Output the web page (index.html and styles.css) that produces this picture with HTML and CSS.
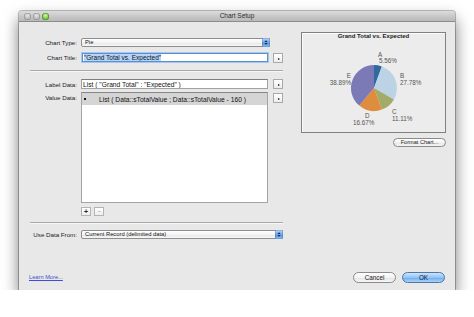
FILE: index.html
```html
<!DOCTYPE html>
<html>
<head>
<meta charset="utf-8">
<title>Chart Setup</title>
<link rel="stylesheet" href="styles.css">
</head>
<body>
<div class="window">
  <div class="titlebar">
    <div class="lights"><span class="light"></span><span class="light"></span><span class="light green"></span></div>
    <div class="title">Chart Setup</div>
  </div>
  <div class="content">
    <div class="left">
      <div class="row r1">
        <span class="lbl">Chart Type:</span>
        <div class="popup w189">
          <span class="ptext">Pie</span>
          <svg class="stepper" width="8" height="9" viewBox="0 0 8 9"><defs><linearGradient id="sg1" x1="0" y1="0" x2="0" y2="1"><stop offset="0" stop-color="#b9d6f6"/><stop offset="0.5" stop-color="#6ea6e6"/><stop offset="0.51" stop-color="#4d8ddc"/><stop offset="1" stop-color="#8cc0f4"/></linearGradient></defs><rect x="0" y="0" width="8" height="9" rx="1.5" fill="url(#sg1)" stroke="#4a6f9e" stroke-width="0.6"/><path d="M2.5 4 L4 2.2 L5.5 4 Z M2.5 5 L4 6.8 L5.5 5 Z" fill="#142850"/></svg>
        </div>
      </div>
      <div class="row r2">
        <span class="lbl">Chart Title:</span>
        <div class="field focus w186"><span class="sel">"Grand Total vs. Expected"</span></div>
        <span class="abtn"><span class="tri"></span></span>
      </div>
      <div class="sep s1"></div>
      <div class="row r3">
        <span class="lbl">Label Data:</span>
        <div class="field w187">List ( "Grand Total" : "Expected" )</div>
        <span class="abtn"><span class="tri"></span></span>
      </div>
      <div class="row r4">
        <span class="lbl">Value Data:</span>
        <div class="list">
          <div class="item"><span class="bullet"></span>List ( Data::sTotalValue ; Data::sTotalValue - 160 )</div>
        </div>
        <span class="abtn top"><span class="tri"></span></span>
      </div>
      <div class="pm"><span class="pmbtn">+</span><span class="pmbtn minus">−</span></div>
      <div class="sep s2"></div>
      <div class="row r5">
        <span class="lbl">Use Data From:</span>
        <div class="popup w202">
          <span class="ptext">Current Record (delimited data)</span>
          <svg class="stepper" width="8" height="9" viewBox="0 0 8 9"><defs><linearGradient id="sg2" x1="0" y1="0" x2="0" y2="1"><stop offset="0" stop-color="#b9d6f6"/><stop offset="0.5" stop-color="#6ea6e6"/><stop offset="0.51" stop-color="#4d8ddc"/><stop offset="1" stop-color="#8cc0f4"/></linearGradient></defs><rect x="0" y="0" width="8" height="9" rx="1.5" fill="url(#sg2)" stroke="#4a6f9e" stroke-width="0.6"/><path d="M2.5 4 L4 2.2 L5.5 4 Z M2.5 5 L4 6.8 L5.5 5 Z" fill="#142850"/></svg>
        </div>
      </div>
    </div>
    <div class="right">
      <div class="chartbox">
        <div class="ctitle">Grand Total vs. Expected</div>
        <svg class="pie" width="143" height="92" viewBox="0 0 143 92">
          <path d="M72 48 L72 25 A23 23 0 0 1 79.87 26.39 Z" fill="#2f6a9e"/>
          <path d="M72 48 L79.87 26.39 A23 23 0 0 1 91.92 59.5 Z" fill="#bcd3e5"/>
          <path d="M72 48 L91.92 59.5 A23 23 0 0 1 79.87 69.61 Z" fill="#a2ab6a"/>
          <path d="M72 48 L79.87 69.61 A23 23 0 0 1 57.22 65.62 Z" fill="#de8c3d"/>
          <path d="M72 48 L57.22 65.62 A23 23 0 0 1 72 25 Z" fill="#7b7ab7"/>
          <g class="plabel">
            <text x="76" y="17">A</text>
            <text x="77" y="23">5.56%</text>
            <text x="98" y="38">B</text>
            <text x="98" y="45">27.78%</text>
            <text x="90" y="74">C</text>
            <text x="90" y="81">11.11%</text>
            <text x="63" y="78">D</text>
            <text x="51" y="85">16.67%</text>
            <text x="49" y="38" text-anchor="end">E</text>
            <text x="49" y="45" text-anchor="end">38.89%</text>
          </g>
        </svg>
      </div>
      <div class="fmt"><span class="pill">Format Chart...</span></div>
    </div>
  </div>
  <div class="footer">
    <a class="learn">Learn More...</a>
    <div class="btns"><span class="btn">Cancel</span><span class="btn ok">OK</span></div>
  </div>
</div>
</body>
</html>
```
FILE: styles.css
```css
html, body {
  margin: 0;
  padding: 0;
  background: #ffffff;
}
body {
  font-family: "Liberation Sans", Arial, sans-serif;
  color: #111;
}
.window {
  margin: 11px 0 0 19px;
  width: 436px;
  height: 279px;
  background: #e8e8e8;
  display: flex;
  flex-direction: column;
  border-radius: 3px 3px 0 0;
  box-shadow: 0 8px 16px rgba(0, 0, 0, 0.55), 0 0 0 1px rgba(0, 0, 0, 0.25);
}
.titlebar {
  height: 11px;
  box-sizing: border-box;
  background: linear-gradient(#dcdcdc, #c6c6c6 60%, #b9b9b9);
  border-bottom: 1px solid #8c8c8c;
  border-radius: 3px 3px 0 0;
  display: flex;
  align-items: center;
}
.lights {
  display: flex;
  padding-left: 5px;
  width: 30px;
  box-sizing: border-box;
}
.light {
  width: 7px;
  height: 7px;
  border-radius: 50%;
  background: radial-gradient(circle at 50% 35%, #e6e6e6, #b0b0b0 75%);
  box-shadow: inset 0 0 0 0.6px #8e8e8e;
}
.light + .light {
  margin-left: 2px;
}
.light.green {
  background: radial-gradient(circle at 50% 35%, #d4f9b0, #6cc33c 60%, #3f9a1f);
  box-shadow: inset 0 0 0 0.6px #4a8a2c;
}
.title {
  flex: 1;
  text-align: center;
  margin-right: 30px;
  font-size: 6.5px;
  color: #2a2a2a;
  line-height: 10px;
}
.content {
  flex: 1;
  display: flex;
}
.left {
  width: 264px;
  box-sizing: border-box;
  padding-left: 11px;
  padding-top: 16px;
}
.right {
  margin-left: 18px;
  width: 145px;
  padding-top: 10px;
}
.row {
  display: flex;
  align-items: center;
}
.lbl {
  width: 47px;
  flex: none;
  text-align: right;
  margin-right: 4px;
  font-size: 6.2px;
  color: #222;
  white-space: nowrap;
}
.r1 { height: 9px; }
.r2 { height: 11px; margin-top: 5px; }
.r3 { height: 10px; margin-top: 7px; }
.r4 { margin-top: 3px; align-items: flex-start; }
.r4 .lbl { line-height: 12px; }
.r5 { height: 9px; margin-top: 6px; }
.popup {
  height: 9px;
  box-sizing: border-box;
  border: 1px solid #8e8e8e;
  border-radius: 2px;
  background: linear-gradient(#ffffff, #f4f4f4 50%, #e6e6e6 51%, #f7f7f7);
  display: flex;
  align-items: stretch;
}
.w189 { width: 189px; }
.w202 { width: 202px; }
.ptext {
  flex: 1;
  font-size: 5.8px;
  line-height: 7px;
  padding-left: 3px;
  white-space: nowrap;
}
.stepper {
  display: block;
  margin: -1px -1px -1px 0;
}
.field {
  height: 10px;
  box-sizing: border-box;
  background: #ffffff;
  border: 1px solid #a2a2a2;
  border-top-color: #7e7e7e;
  font-size: 6.7px;
  padding-left: 1px;
  display: flex;
  align-items: center;
  white-space: nowrap;
  overflow: hidden;
}
.w186 { width: 186px; margin-left: 1px; }
.w187 { width: 187px; }
.field.focus {
  height: 9px;
  border-color: #5b90d0;
  box-shadow: 0 0 0 1px #a6c6ee;
  font-size: 6.5px;
}
.sel {
  background: #b6d4fa;
}
.abtn {
  width: 10px;
  height: 10px;
  box-sizing: border-box;
  margin-left: 5px;
  border: 1px solid #a9a9a9;
  background: linear-gradient(#ffffff, #ececec);
  display: flex;
  align-items: flex-end;
  justify-content: center;
  padding: 0 0 2px 2px;
}
.abtn.top {
  margin-top: 1px;
}
.tri {
  width: 0;
  height: 0;
  border-left: 2px solid #111;
  border-top: 1.5px solid transparent;
  border-bottom: 1.5px solid transparent;
}
.sep {
  width: 253px;
  height: 1px;
  background: #a9a9a9;
  border-bottom: 1px solid #f7f7f7;
}
.s1 { margin-top: 7px; }
.s2 { margin-top: 6px; }
.list {
  width: 187px;
  height: 111px;
  box-sizing: border-box;
  background: #ffffff;
  border: 1px solid #a4a4a4;
  border-top-color: #868686;
}
.item {
  height: 12px;
  background: #d5d5d5;
  display: flex;
  align-items: center;
  font-size: 6.7px;
  white-space: nowrap;
}
.bullet {
  width: 2px;
  height: 2px;
  background: #111;
  margin: 0 13px 0 2px;
}
.pm {
  display: flex;
  margin-top: 4px;
  margin-left: 51px;
  height: 9px;
}
.pmbtn {
  width: 10px;
  height: 9px;
  box-sizing: border-box;
  border: 1px solid #b4b4b4;
  background: linear-gradient(#ffffff, #ededed);
  font-size: 7px;
  font-weight: bold;
  line-height: 7px;
  text-align: center;
  color: #222;
}
.pmbtn.minus {
  margin-left: 3px;
  color: #a8a8a8;
  font-weight: normal;
}
.chartbox {
  width: 145px;
  height: 101px;
  box-sizing: border-box;
  border: 1px solid #808080;
  background: #ececec;
  box-shadow: inset 1px 1px 0 #fbfbfb;
}
.ctitle {
  font-size: 6px;
  font-weight: bold;
  line-height: 7px;
  text-align: center;
  color: #222;
}
.pie {
  display: block;
}
.plabel text {
  font-family: "Liberation Sans", Arial, sans-serif;
  font-size: 6.3px;
  fill: #555555;
}
.fmt {
  display: flex;
  justify-content: flex-end;
  margin-top: 5px;
}
.pill {
  width: 53px;
  height: 9px;
  box-sizing: border-box;
  border: 1px solid #8a8a8a;
  border-radius: 5px;
  background: linear-gradient(#ffffff, #f3f3f3 50%, #e4e4e4 51%, #f6f6f6);
  font-size: 5.6px;
  line-height: 7px;
  text-align: center;
  color: #222;
}
.footer {
  height: 22px;
  box-sizing: border-box;
  padding: 4px 10px 8px;
  display: flex;
  align-items: center;
  justify-content: space-between;
}
.learn {
  font-size: 5.7px;
  color: #3c4fd6;
  text-decoration: underline;
}
.btns {
  display: flex;
}
.btn {
  width: 43px;
  height: 11px;
  box-sizing: border-box;
  border: 1px solid #8a8a8a;
  border-radius: 6px;
  background: linear-gradient(#ffffff, #f3f3f3 50%, #e3e3e3 51%, #f8f8f8);
  font-size: 6.3px;
  line-height: 9px;
  text-align: center;
  color: #222;
}
.btn + .btn {
  margin-left: 6px;
}
.btn.ok {
  background: linear-gradient(#cde4fb, #93c3f3 50%, #6da9ea 51%, #a9d2fa);
  border-color: #4d76aa;
  color: #0f2038;
}
```
